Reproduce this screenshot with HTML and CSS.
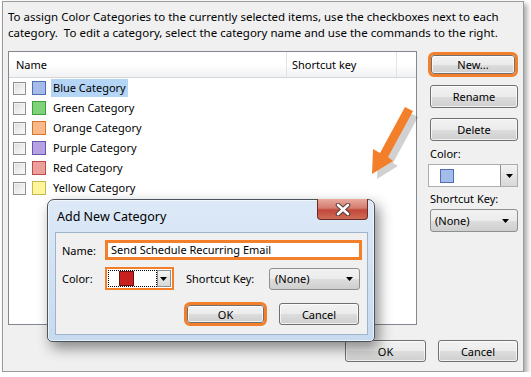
FILE: index.html
```html
<!DOCTYPE html>
<html lang="en">
<head>
  <meta charset="UTF-8">
  <title>Color Categories</title>
  <link rel="stylesheet" href="styles.css">
</head>
<body>
  <div class="window">
    <p class="intro">To assign Color Categories to the currently selected items, use the checkboxes next to each<br>category.&nbsp; To edit a category, select the category name and use the commands to the right.</p>
    <div class="main">
      <div class="list">
        <div class="list-head">
          <span class="col-name">Name</span>
          <span class="col-key">Shortcut key</span>
        </div>
        <div class="row"><span class="check"></span><span class="swatch blue"></span><span class="label selected">Blue Category</span></div>
        <div class="row"><span class="check"></span><span class="swatch green"></span><span class="label">Green Category</span></div>
        <div class="row"><span class="check"></span><span class="swatch orange"></span><span class="label">Orange Category</span></div>
        <div class="row"><span class="check"></span><span class="swatch purple"></span><span class="label">Purple Category</span></div>
        <div class="row"><span class="check"></span><span class="swatch red"></span><span class="label">Red Category</span></div>
        <div class="row"><span class="check"></span><span class="swatch yellow"></span><span class="label">Yellow Category</span></div>
      </div>
      <div class="side">
        <button class="btn new hl">New...</button>
        <button class="btn rename">Rename</button>
        <button class="btn delete">Delete</button>
        <div class="side-label first">Color:</div>
        <div class="color-box">
          <span class="swatch blue"></span>
          <span class="drop-btn"><svg width="7" height="4" viewBox="0 0 7 4"><path d="M0 0h7L3.5 4z" fill="#000"/></svg></span>
        </div>
        <div class="side-label">Shortcut Key:</div>
        <div class="combo">
          <span>(None)</span>
          <svg width="7" height="4" viewBox="0 0 7 4"><path d="M0 0h7L3.5 4z" fill="#000"/></svg>
        </div>
      </div>
    </div>
    <div class="footer">
      <button class="btn ok">OK</button>
      <button class="btn cancel">Cancel</button>
    </div>
  </div>

  <div class="dialog">
    <div class="dialog-title">Add New Category</div>
    <div class="close">
      <svg width="16" height="13" viewBox="0 0 16 13">
        <path d="M3 2L13 11M13 2L3 11" stroke="#5a3b38" stroke-width="4.6" stroke-linecap="round"/>
        <path d="M3 2L13 11M13 2L3 11" stroke="#fff" stroke-width="2.6" stroke-linecap="round"/>
      </svg>
    </div>
    <div class="client">
      <div class="field">
        <span class="field-label">Name:</span>
        <div class="name-input">Send Schedule Recurring Email</div>
      </div>
      <div class="field second">
        <span class="field-label">Color:</span>
        <div class="color-pick">
          <span class="focus"><span class="swatch dark-red"></span></span>
          <span class="drop-btn"><svg width="7" height="4" viewBox="0 0 7 4"><path d="M0 0h7L3.5 4z" fill="#000"/></svg></span>
        </div>
        <span class="key-label">Shortcut Key:</span>
        <div class="combo small">
          <span>(None)</span>
          <svg width="7" height="4" viewBox="0 0 7 4"><path d="M0 0h7L3.5 4z" fill="#000"/></svg>
        </div>
      </div>
      <div class="dialog-buttons">
        <button class="btn d-ok hl">OK</button>
        <button class="btn d-cancel">Cancel</button>
      </div>
    </div>
  </div>

  <svg class="arrow" width="531" height="377" viewBox="0 0 531 377">
    <polygon points="407,110 415,114 390,160 395,163 374,176 375,151 382,155" fill="#000" opacity="0.18" transform="translate(3,3)"/>
    <polygon points="405,107 413,111 388,157 393,161 372,174 373,149 380,153" fill="#f47f2a"/>
  </svg>
</body>
</html>
```

FILE: styles.css
```css
body {
  margin: 0;
  padding: 1px 0 0 2px;
  background: #fff;
  font-family: "Noto Sans", sans-serif;
  font-size: 11px;
  color: #000;
}
.window {
  box-sizing: border-box;
  width: 522px;
  height: 371px;
  border: 1px solid #9a9a9a;
  background: #f0f0f0;
  padding: 7px 5px 0 5px;
  box-shadow: 3px 3px 5px rgba(0, 0, 0, 0.35);
  display: flex;
  flex-direction: column;
}
.intro {
  margin: 0;
  line-height: 16px;
  font-size: 11.5px;
}
.main {
  display: flex;
  gap: 13px;
  margin-top: 10px;
}
.list {
  box-sizing: border-box;
  width: 409px;
  height: 274px;
  border: 1px solid #828790;
  background: #fff;
}
.list-head {
  box-sizing: border-box;
  display: flex;
  height: 26px;
  background: linear-gradient(#fff 45%, #f1f2f4);
  border-bottom: 1px solid #d5d5d5;
}
.col-name,
.col-key {
  box-sizing: border-box;
  line-height: 25px;
  border-right: 1px solid #e3e3e3;
}
.col-name {
  width: 278px;
  padding-left: 7px;
}
.col-key {
  width: 110px;
  padding-left: 5px;
}
.row {
  height: 20px;
  display: flex;
  align-items: center;
  padding-left: 4px;
}
.check {
  box-sizing: border-box;
  width: 13px;
  height: 13px;
  border: 1px solid #8e8f8f;
  background: linear-gradient(135deg, #dcdcdc, #fbfbfb);
  box-shadow: inset 0 0 0 1px #f4f4f4;
}
.swatch {
  box-sizing: border-box;
  display: inline-block;
  width: 14px;
  height: 14px;
  border: 1px solid;
}
.row .swatch {
  margin-left: 6px;
}
.blue { background: #a5bbea; border-color: #4d6fb4; }
.green { background: #7fd27a; border-color: #3e9e3e; }
.orange { background: #fab98b; border-color: #d3742f; }
.purple { background: #b6a1e2; border-color: #6c55ae; }
.red { background: #eba09c; border-color: #c04a45; }
.yellow { background: #fff69c; border-color: #c8b84c; }
.dark-red { background: #c8201f; border-color: #6e1010; width: 15px; height: 15px; }
.label {
  margin-left: 5px;
  padding: 0 2px;
  line-height: 18px;
}
.selected {
  background: #b4d5f5;
}
.side {
  width: 88px;
  display: flex;
  flex-direction: column;
}
.btn {
  box-sizing: border-box;
  height: 23px;
  padding: 0;
  border: 1px solid #707070;
  border-radius: 3px;
  background: linear-gradient(#f2f2f2 0%, #ebebeb 50%, #dddddd 51%, #cfcfcf 100%);
  box-shadow: inset 0 0 0 1px rgba(255, 255, 255, 0.7);
  font: inherit;
  color: #000;
}
.hl {
  outline: 3px solid #f47f2a;
}
.new {
  width: 84px;
  height: 19px;
  margin: 4px 0 0 1px;
}
.rename {
  margin-top: 11px;
}
.delete {
  margin-top: 10px;
}
.side-label {
  line-height: 16px;
  margin-top: 4px;
}
.side-label.first {
  margin-top: 5px;
}
.color-box {
  box-sizing: border-box;
  display: flex;
  align-items: center;
  height: 23px;
  width: 90px;
  margin: 2px 0 0 -2px;
  border: 1px solid #abadb3;
  background: #fff;
}
.color-box .swatch {
  margin-left: 11px;
}
.drop-btn {
  box-sizing: border-box;
  margin-left: auto;
  width: 17px;
  height: 100%;
  display: flex;
  align-items: center;
  justify-content: center;
  border-left: 1px solid #8e8f8f;
  background: linear-gradient(#f3f3f3, #d8d8d8);
}
.combo {
  box-sizing: border-box;
  display: flex;
  align-items: center;
  justify-content: space-between;
  height: 23px;
  margin-top: 2px;
  padding: 0 8px 0 4px;
  border: 1px solid #8e8f8f;
  border-radius: 3px;
  background: linear-gradient(#f2f2f2 0%, #ebebeb 50%, #dddddd 51%, #cfcfcf 100%);
}
.footer {
  display: flex;
  justify-content: flex-end;
  gap: 12px;
  margin-top: 15px;
}
.ok {
  width: 81px;
  height: 22px;
}
.cancel {
  width: 80px;
  height: 22px;
}

/* floating dialog */
.dialog {
  position: absolute;
  left: 47px;
  top: 199px;
  box-sizing: border-box;
  width: 328px;
  height: 143px;
  padding: 0 6px 6px 7px;
  border: 1px solid #4e545c;
  border-radius: 7px 7px 5px 5px;
  background: linear-gradient(#dde9f7, #c6daf0);
  box-shadow: inset 0 0 0 1px rgba(255, 255, 255, 0.6), 4px 6px 14px rgba(0, 0, 0, 0.45);
  display: flex;
  flex-direction: column;
}
.dialog-title {
  height: 32px;
  line-height: 34px;
  padding-left: 2px;
  font-size: 12.5px;
}
.close {
  position: absolute;
  top: -1px;
  right: 6px;
  box-sizing: border-box;
  width: 51px;
  height: 21px;
  display: flex;
  align-items: center;
  justify-content: center;
  border: 1px solid #6a2c26;
  border-top: none;
  border-radius: 0 0 4px 4px;
  background: linear-gradient(#e8aa9f 0%, #d47c6e 45%, #c2483b 55%, #cf6a57 100%);
}
.client {
  flex: 1;
  border: 1px solid #9fb3cb;
  background: #f0f0f0;
  padding: 7px 0 0 6px;
}
.field {
  display: flex;
  align-items: center;
}
.field.second {
  margin-top: 7px;
}
.field-label {
  width: 43px;
}
.name-input {
  box-sizing: border-box;
  width: 257px;
  height: 20px;
  line-height: 14px;
  padding-left: 3px;
  border: 3px solid #f47f2a;
  background: #fff;
}
.color-pick {
  box-sizing: border-box;
  display: flex;
  align-items: center;
  width: 69px;
  height: 23px;
  padding: 1px;
  border: 2px solid #f47f2a;
  background: #fff;
}
.focus {
  box-sizing: border-box;
  display: flex;
  align-items: center;
  height: 100%;
  width: 51px;
  padding-left: 10px;
  border: 1px dotted #000;
}
.color-pick .drop-btn {
  width: 15px;
  border: 1px solid #8e8f8f;
}
.key-label {
  width: 72px;
  margin-left: 12px;
}
.combo.small {
  width: 91px;
  height: 22px;
  margin: 0 0 0 11px;
  padding: 0 6px 0 5px;
}
.dialog-buttons {
  display: flex;
  align-items: center;
  margin-top: 13px;
  padding-left: 125px;
}
.d-ok {
  width: 77px;
  height: 18px;
}
.d-cancel {
  width: 80px;
  height: 22px;
  margin-left: 15px;
}
.arrow {
  position: absolute;
  left: 0;
  top: 0;
  pointer-events: none;
}
```
